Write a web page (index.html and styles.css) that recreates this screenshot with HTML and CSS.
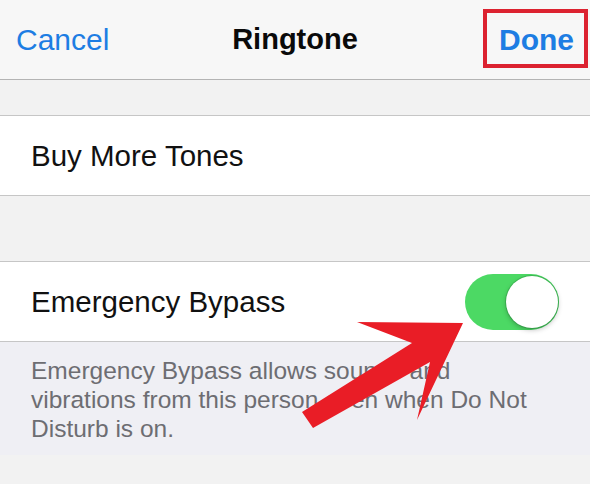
FILE: index.html
```html
<!DOCTYPE html>
<html lang="en">
<head>
  <meta charset="UTF-8">
  <title>Ringtone</title>
  <link rel="stylesheet" href="styles.css">
</head>
<body>
  <div class="screen">
    <div class="navbar">
      <span class="nav-btn">Cancel</span>
      <span class="nav-title">Ringtone</span>
      <span class="nav-btn done">Done</span>
    </div>

    <div class="group-gap small"></div>
    <div class="cell">Buy More Tones</div>

    <div class="group-gap"></div>
    <div class="cell">
      <span>Emergency Bypass</span>
      <span class="switch on"><span class="knob"></span></span>
    </div>

    <div class="footer-note">
      Emergency Bypass allows sounds and vibrations from this person even when Do Not Disturb is on.
    </div>

    <!-- red pointer arrow drawn over the list -->
    <svg class="pointer" width="590" height="484" viewBox="0 0 590 484">
      <polygon points="302,412 412,343 357,322 463,323 417,420 430,362 313,428" fill="#e91d26"/>
    </svg>
  </div>
</body>
</html>
```

FILE: styles.css
```css
body {
  margin: 0;
  background: #f2f2f2;
  font-family: 'Liberation Sans', Arial, sans-serif;
}

.screen {
  position: relative;
  width: 590px;
  height: 484px;
  overflow: hidden;
  background: #f2f2f2;
}

.navbar {
  display: grid;
  grid-template-columns: 1fr auto 1fr;
  align-items: center;
  height: 79px;
  padding: 0 16px;
  background: #f7f7f7;
  border-bottom: 1px solid #b4b4b4;
}

.nav-btn {
  color: #1d7de3;
  font-size: 30px;
}

.nav-title {
  font-size: 29px;
  font-weight: bold;
  color: #0a0a0a;
}

.done {
  justify-self: end;
  font-weight: bold;
  position: relative;
}

/* highlight box around the Done button */
.done::after {
  content: '';
  position: absolute;
  left: -16px;
  right: -14px;
  top: -14px;
  bottom: -11px;
  border: 4px solid #dc2230;
}

.group-gap {
  height: 65px;
  background: #f2f2f2;
  border-bottom: 1px solid #c6c6c6;
}

.group-gap.small {
  height: 35px;
}

.cell {
  display: flex;
  justify-content: space-between;
  align-items: center;
  height: 79px;
  padding: 0 31px;
  background: #fff;
  border-bottom: 1px solid #c6c6c6;
  font-size: 29.5px;
  color: #111;
}

.switch {
  position: relative;
  width: 94px;
  height: 56px;
  border-radius: 28px;
  background: #4cd964;
}

.switch .knob {
  position: absolute;
  right: 1px;
  top: 2px;
  width: 52px;
  height: 52px;
  border-radius: 50%;
  background: #fff;
  box-shadow: 0 2px 5px rgba(0, 0, 0, 0.25), 0 0 0 1px rgba(40, 140, 60, 0.35);
}

.footer-note {
  padding: 14px 40px 12px 31px;
  background: #efeff4;
  color: #6d6d72;
  font-size: 24.5px;
  line-height: 29px;
}

.pointer {
  position: absolute;
  left: 0;
  top: 0;
  pointer-events: none;
}
```
